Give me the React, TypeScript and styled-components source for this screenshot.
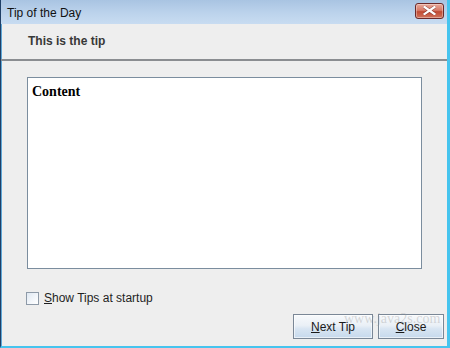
import React, { useState } from "react";
import styled, { createGlobalStyle } from "styled-components";

const GlobalStyle = createGlobalStyle`
  html, body {
    margin: 0;
    padding: 0;
    background: #ffffff;
  }
  body {
    font-family: "Liberation Sans", Arial, sans-serif;
  }
`;

const App: React.FC = () => {
  const [showTips, setShowTips] = useState(false);

  return (
    <>
      <GlobalStyle />
      <Frame>
        <TitleBar>
          <Title>Tip of the Day</Title>
          <CloseBox aria-label="Close">
            <svg width="13" height="9" viewBox="0 0 13 9">
              <path
                d="M1.5 1 L11.5 8 M11.5 1 L1.5 8"
                stroke="#5a1a1a"
                strokeWidth="3.4"
                strokeLinecap="square"
                opacity="0.5"
              />
              <path
                d="M1.5 1 L11.5 8 M11.5 1 L1.5 8"
                stroke="#ffffff"
                strokeWidth="2.2"
                strokeLinecap="square"
              />
            </svg>
          </CloseBox>
        </TitleBar>

        <Header>This is the tip</Header>
        <Separator />

        <Body>
          <TipPane>Content</TipPane>

          <CheckRow onClick={() => setShowTips(!showTips)}>
            <CheckBox checked={showTips}>{showTips ? "✓" : ""}</CheckBox>
            <CheckLabel>
              <u>S</u>how Tips at startup
            </CheckLabel>
          </CheckRow>

          <ButtonRow>
            <DialogButton width={80}>
              <u>N</u>ext Tip
            </DialogButton>
            <DialogButton width={66}>
              <u>C</u>lose
            </DialogButton>
          </ButtonRow>
        </Body>

        <Watermark>www.java2s.com</Watermark>
      </Frame>
    </>
  );
};

export default App;

const Frame = styled.div`
  position: relative;
  width: 450px;
  height: 348px;
  box-sizing: border-box;
  display: flex;
  flex-direction: column;
  background: #eeeeee;
  border-left: 1px solid #1f3f66;
  border-right: 3px solid #46c4ee;
  border-bottom: 2px solid #46c4ee;
  box-shadow: inset 1px 0 0 #5fa8d8;
  overflow: hidden;
`;

const TitleBar = styled.div`
  height: 24px;
  flex-shrink: 0;
  display: flex;
  align-items: center;
  justify-content: space-between;
  padding: 0 3px 0 6px;
  background: linear-gradient(to bottom, #a9c4e2 0%, #bcd3ec 55%, #c8dcf1 100%);
`;

const Title = styled.span`
  font-size: 12px;
  color: #111111;
  margin-top: 1px;
`;

const CloseBox = styled.div`
  width: 29px;
  height: 16px;
  box-sizing: border-box;
  margin-top: -3px;
  display: flex;
  align-items: center;
  justify-content: center;
  border: 1px solid #6b2a2a;
  border-radius: 3px;
  background: linear-gradient(to bottom, #e8a99b 0%, #d77a68 45%, #c04a33 55%, #d0745c 100%);
  box-shadow: inset 0 0 0 1px rgba(255, 255, 255, 0.35);
`;

const Header = styled.div`
  height: 35px;
  flex-shrink: 0;
  display: flex;
  align-items: center;
  padding-left: 27px;
  font-size: 12px;
  font-weight: bold;
  color: #383838;
  padding-bottom: 1px;
  box-sizing: border-box;
`;

const Separator = styled.div`
  height: 2px;
  flex-shrink: 0;
  background: #8a8d91;
`;

const Body = styled.div`
  flex: 1;
  display: flex;
  flex-direction: column;
  padding: 16px 0 0 0;
`;

const TipPane = styled.div`
  height: 192px;
  margin: 0 25px 0 26px;
  box-sizing: border-box;
  border: 1px solid #7b8d9e;
  background: #ffffff;
  padding: 6px 4px;
  font-family: "Liberation Serif", "Times New Roman", serif;
  font-size: 14px;
  font-weight: bold;
  color: #000000;
`;

const CheckRow = styled.div`
  margin-top: 23px;
  height: 13px;
  display: flex;
  align-items: center;
  gap: 5px;
  padding-left: 25px;
  cursor: pointer;
`;

const CheckBox = styled.span<{ checked: boolean }>`
  width: 13px;
  height: 13px;
  box-sizing: border-box;
  border: 1px solid #8e9aa8;
  background: linear-gradient(135deg, #dfe8f2 0%, #f4f7fb 60%, #ffffff 100%);
  font-size: 10px;
  line-height: 11px;
  text-align: center;
  color: #1f3f66;
`;

const CheckLabel = styled.span`
  font-size: 12px;
  color: #1e1e1e;
  line-height: 13px;
`;

const ButtonRow = styled.div`
  margin-top: 9px;
  display: flex;
  justify-content: flex-end;
  gap: 5px;
  padding-right: 3px;
`;

const DialogButton = styled.button<{ width: number }>`
  width: ${(props) => props.width}px;
  height: 25px;
  box-sizing: border-box;
  padding: 0;
  border: 1px solid #7a8796;
  border-radius: 0;
  background: linear-gradient(to bottom, #f7f9fb 0%, #eaf0f6 45%, #d8e5f2 60%, #c6d9ec 100%);
  box-shadow: inset 0 0 0 1px rgba(255, 255, 255, 0.6);
  font-family: "Liberation Sans", Arial, sans-serif;
  font-size: 12px;
  color: #1a1a1a;
  cursor: pointer;
`;

const Watermark = styled.div`
  position: absolute;
  left: 343px;
  top: 311px;
  font-family: "Liberation Serif", "Times New Roman", serif;
  font-size: 14px;
  color: rgba(150, 150, 150, 0.35);
  pointer-events: none;
  white-space: nowrap;
`;
